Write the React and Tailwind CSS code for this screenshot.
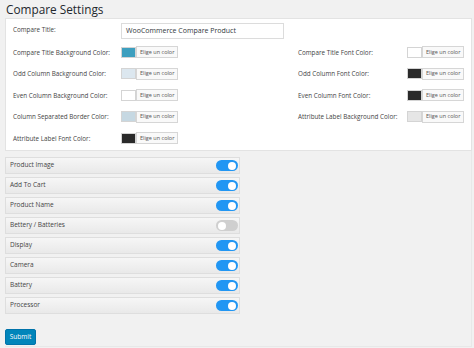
import React, { useState } from "react";

const leftFields = [
  { label: "Compare Title Background Color:", color: "#3d9fbf" },
  { label: "Odd Column Background Color:", color: "#dce7ef" },
  { label: "Even Column Background Color:", color: "#ffffff" },
  { label: "Column Separated Border Color:", color: "#c6d8e2" },
  { label: "Attribute Label Font Color:", color: "#2a2a2a" },
];

const rightFields = [
  { label: "Compare Title Font Color:", color: "#ffffff" },
  { label: "Odd Column Font Color:", color: "#2a2a2a" },
  { label: "Even Column Font Color:", color: "#2a2a2a" },
  { label: "Attribute Label Background Color:", color: "#e6e6e6" },
];

const fieldsInit = [
  { name: "Product Image", on: true },
  { name: "Add To Cart", on: true },
  { name: "Product Name", on: true },
  { name: "Bettery / Batteries", on: false },
  { name: "Display", on: true },
  { name: "Camera", on: true },
  { name: "Battery", on: true },
  { name: "Processor", on: true },
];

const ColorPicker = ({ color }) => (
  <div className="flex items-center">
    <span
      className="w-[15px] h-[11px] border border-[#d4d4d4]"
      style={{ backgroundColor: color }}
    />
    <button className="h-[12px] px-[3px] bg-[#f9f9f9] border border-[#d6d6d6] text-[5.5px] leading-none text-[#555]">
      Elige un color
    </button>
  </div>
);

const Toggle = ({ on, onClick }) => (
  <button
    onClick={onClick}
    className={`relative w-[22px] h-[11px] rounded-full ${on ? "bg-[#2196f3]" : "bg-[#cfcfcf]"}`}
  >
    <span
      className={`absolute top-[1.5px] w-[8px] h-[8px] rounded-full bg-white ${on ? "right-[2px]" : "left-[2px]"}`}
    />
  </button>
);

const App = () => {
  const [fields, setFields] = useState(fieldsInit);

  const flip = (i) =>
    setFields(fields.map((f, j) => (j === i ? { ...f, on: !f.on } : f)));

  return (
    <div
      className="min-h-[348px] bg-[#f1f1f1] pl-[5px] text-[#444]"
      style={{ fontFamily: '"Open Sans", "Noto Sans", sans-serif' }}
    >
      <h1 className="h-[18px] pl-[1px] text-[11.8px] leading-[19px] text-[#23282d]">
        Compare Settings
      </h1>

      {/* Settings table */}
      <div className="w-[467px] bg-white border border-[#e3e3e3] pt-[1px] pb-[1px] text-[6.3px]">
        <div className="flex items-center h-[21.5px]">
          <span className="w-[115px] pl-[7px] -mt-[2px]">Compare Title:</span>
          <div className="w-[163px] h-[16px] border border-[#dcdcdc] flex items-center px-[4px] text-[7px] text-[#32373c]">
            WooCommerce Compare Product
          </div>
        </div>
        <div className="flex">
          <div className="w-[292px]">
            {leftFields.map((f) => (
              <div key={f.label} className="flex items-center h-[21.5px]">
                <span className="w-[115px] pl-[7px]">{f.label}</span>
                <ColorPicker color={f.color} />
              </div>
            ))}
          </div>
          <div className="flex-1">
            {rightFields.map((f) => (
              <div key={f.label} className="flex items-center h-[21.5px]">
                <span className="w-[109px]">{f.label}</span>
                <ColorPicker color={f.color} />
              </div>
            ))}
          </div>
        </div>
      </div>

      {/* Field toggles */}
      <div className="w-[467px] h-[196px] border-r border-b border-[#e8e8e8] pt-[6px]">
        <div className="w-[235px] flex flex-col gap-[3px]">
          {fields.map((f, i) => (
            <div
              key={f.name}
              className="h-[17px] flex items-center justify-between pl-[4px] pr-[1px] border border-[#dedede] bg-gradient-to-b from-[#f6f6f6] to-[#e9e9e9] text-[6.5px]"
            >
              <span className="self-start pt-[2px]">{f.name}</span>
              <Toggle on={f.on} onClick={() => flip(i)} />
            </div>
          ))}
        </div>
        <button className="mt-[15px] w-[31px] h-[16px] rounded-[2px] bg-[#0085ba] border border-[#0073aa] text-white text-[6.5px]">
          Submit
        </button>
      </div>
    </div>
  );
};

export default App;
